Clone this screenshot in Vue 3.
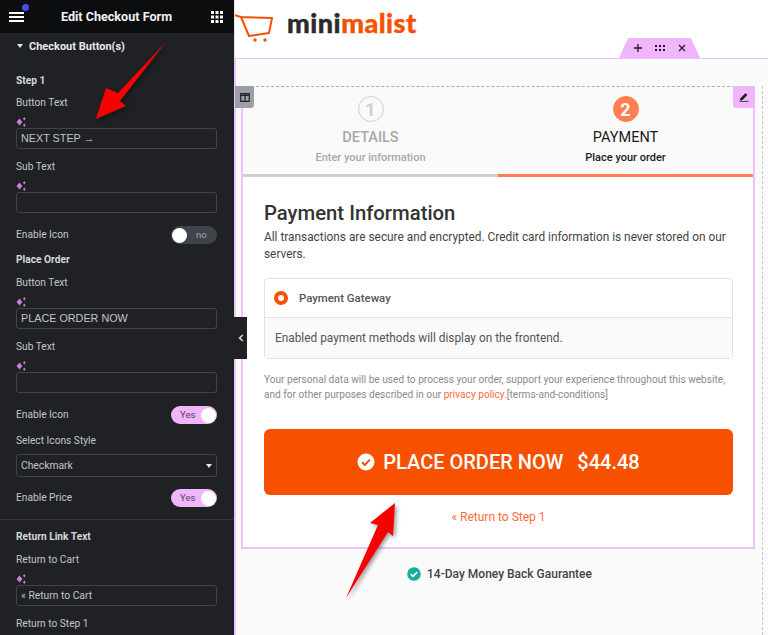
<template>
  <div class="page">
    <aside class="panel">
      <div class="panel-head">
        <span class="burger"><i></i><i></i><i></i><b class="dot"></b></span>
        <span class="panel-title">Edit Checkout Form</span>
        <svg class="apps" width="12" height="12" viewBox="0 0 12 12" fill="#fff">
          <template v-for="y in [0, 4.5, 9]" :key="y">
            <rect v-for="x in [0, 4.5, 9]" :key="x" :x="x" :y="y" width="3" height="3" />
          </template>
        </svg>
      </div>
      <div class="panel-body">
        <div class="group-title"><span class="caret"></span>Checkout Button(s)</div>

        <div class="sub-title first">Step 1</div>
        <div class="label">Button Text</div>
        <svg class="spark" viewBox="0 0 10 10"><path d="M3.500 1.500 6.500 5 3.500 8.500 .5 5zM8.300 0l1.300 1.700-1.300 1.700-1.300-1.700zM8.300 6.600l1.300 1.700-1.300 1.700-1.300-1.700z" /></svg>
        <div class="input">NEXT STEP →</div>
        <div class="label next">Sub Text</div>
        <svg class="spark" viewBox="0 0 10 10"><path d="M3.500 1.500 6.500 5 3.500 8.500 .5 5zM8.300 0l1.300 1.700-1.300 1.700-1.300-1.700zM8.300 6.600l1.300 1.700-1.300 1.700-1.300-1.700z" /></svg>
        <div class="input"></div>
        <div class="switch-row">
          <span class="label">Enable Icon</span>
          <span class="switch off"><em>no</em><u></u></span>
        </div>

        <div class="sub-title">Place Order</div>
        <div class="label btn-label">Button Text</div>
        <svg class="spark" viewBox="0 0 10 10"><path d="M3.500 1.500 6.500 5 3.500 8.500 .5 5zM8.300 0l1.300 1.700-1.300 1.700-1.300-1.700zM8.300 6.600l1.300 1.700-1.300 1.700-1.300-1.700z" /></svg>
        <div class="input">PLACE ORDER NOW</div>
        <div class="label next">Sub Text</div>
        <svg class="spark" viewBox="0 0 10 10"><path d="M3.500 1.500 6.500 5 3.500 8.500 .5 5zM8.300 0l1.300 1.700-1.300 1.700-1.300-1.700zM8.300 6.600l1.300 1.700-1.300 1.700-1.300-1.700z" /></svg>
        <div class="input"></div>
        <div class="switch-row">
          <span class="label">Enable Icon</span>
          <span class="switch"><em>Yes</em><u></u></span>
        </div>
        <div class="label style-label">Select Icons Style</div>
        <div class="input plain select">Checkmark<span class="caret small"></span></div>
        <div class="switch-row price-row">
          <span class="label">Enable Price</span>
          <span class="switch"><em>Yes</em><u></u></span>
        </div>
        <div class="divider"></div>

        <div class="sub-title return">Return Link Text</div>
        <div class="label btn-label">Return to Cart</div>
        <svg class="spark" viewBox="0 0 10 10"><path d="M3.500 1.500 6.500 5 3.500 8.500 .5 5zM8.300 0l1.300 1.700-1.300 1.700-1.300-1.700zM8.300 6.600l1.300 1.700-1.300 1.700-1.300-1.700z" /></svg>
        <div class="input plain">« Return to Cart</div>
        <div class="label next">Return to Step 1</div>
      </div>
      <div class="collapse">
        <svg width="6" height="8" viewBox="0 0 6 8"><path d="M4.800 1 1.600 4l3.200 3" fill="none" stroke="#d5d8dc" stroke-width="1.600" /></svg>
      </div>
    </aside>

    <main class="canvas">
      <header class="site-head">
        <svg class="cart" width="42" height="44" viewBox="0 0 42 44">
          <path d="M-1 15 6 17 14 36 34 33 37 18 6 17" fill="none" stroke="#f75000" stroke-width="2" stroke-linejoin="round" />
          <circle cx="20" cy="40" r="1.700" fill="#f75000" />
          <circle cx="30" cy="40" r="1.700" fill="#f75000" />
        </svg>
        <span class="logo">mini<span>malist</span></span>
        <div class="section-tab">
          <svg width="10" height="10" viewBox="0 0 10 10"><path d="M5 1v8M1 5h8" stroke="#1d1d1d" stroke-width="1.300" /></svg>
          <svg width="12" height="8" viewBox="0 0 12 8" fill="#1d1d1d"><rect x="1" y="1" width="2" height="2" /><rect x="5" y="1" width="2" height="2" /><rect x="9" y="1" width="2" height="2" /><rect x="1" y="5" width="2" height="2" /><rect x="5" y="5" width="2" height="2" /><rect x="9" y="5" width="2" height="2" /></svg>
          <svg width="10" height="10" viewBox="0 0 10 10"><path d="M2 2l6 6M8 2l-6 6" stroke="#1d1d1d" stroke-width="1.200" /></svg>
        </div>
      </header>

      <section class="section">
        <div class="widget">
          <span class="handle handle-column">
            <svg width="10" height="9" viewBox="0 0 10 9"><path d="M.7.7h8.600v7.600H.7zM5 .7v7.600M.7 2.300h8.600" fill="none" stroke="#1f2124" stroke-width="1.200" /></svg>
          </span>
          <span class="handle handle-edit">
            <svg width="10" height="10" viewBox="0 0 10 10"><path d="M1.500 6.500 6.500 1.500l1.600 1.500-5 5H1.500zM.5 9.400h9" fill="#1f2124" stroke="#1f2124" stroke-width=".8" /></svg>
          </span>
          <div class="steps">
            <div class="step">
              <span class="num">1</span>
              <div class="step-name">DETAILS</div>
              <div class="step-sub">Enter your information</div>
            </div>
            <div class="step active">
              <span class="num">2</span>
              <div class="step-name">PAYMENT</div>
              <div class="step-sub">Place your order</div>
            </div>
          </div>
          <div class="card">
            <h2>Payment Information</h2>
            <p class="intro">All transactions are secure and encrypted. Credit card information is never stored on our servers.</p>
            <div class="gateway">
              <div class="gateway-row"><span class="radio"></span>Payment Gateway</div>
              <div class="gateway-note">Enabled payment methods will display on the frontend.</div>
            </div>
            <p class="terms">Your personal data will be used to process your order, support your experience throughout this website, and for other purposes described in our <a>privacy policy</a>.[terms-and-conditions]</p>
            <div class="order-btn">
              <svg width="18" height="18" viewBox="0 0 18 18"><circle cx="9" cy="9" r="8.500" fill="#fff" /><path d="M5 9.300l2.800 2.700L13 6.600" fill="none" stroke="#f75000" stroke-width="2" /></svg>
              <span>PLACE ORDER NOW</span><span class="price">$44.48</span>
            </div>
            <div class="back-link">« Return to Step 1</div>
          </div>
        </div>
        <div class="guarantee">
          <svg width="14" height="14" viewBox="0 0 14 14"><circle cx="7" cy="7" r="6.800" fill="#17ae9b" /><path d="M3.700 7.200l2.300 2.200 4.300-4.400" fill="none" stroke="#fff" stroke-width="1.600" /></svg>
          14-Day Money Back Gaurantee
        </div>
      </section>
    </main>

    <svg class="arrows" width="768" height="635" viewBox="0 0 768 635">
      <path d="M166 42 118 93 106 88 96 119 126 106 120 101z" />
      <path d="M395 503 370 523 378 525 346 598 388 532 393 536z" />
    </svg>
  </div>
</template>

<script setup>
</script>

<style>
html, body {
  margin: 0;
  overflow: hidden;
}
</style>

<style scoped>
.page {
  position: relative;
  display: flex;
  width: 768px;
  height: 635px;
  overflow: hidden;
  font-family: Roboto, "Liberation Sans", sans-serif;
}

.panel {
  position: relative;
  flex: 0 0 234px;
  background: #1f2124;
  color: #d5d8dc;
}

.panel-head {
  display: flex;
  align-items: center;
  justify-content: space-between;
  height: 33px;
  padding: 0 11px 0 9px;
  background: #0c0d0e;
}

.burger {
  position: relative;
  display: flex;
  flex-direction: column;
  gap: 2px;
  width: 15px;
}

.burger i {
  height: 2px;
  background: #fff;
}

.dot {
  position: absolute;
  top: -8px;
  right: -5px;
  width: 7px;
  height: 7px;
  border-radius: 50%;
  background: #4a4af5;
}

.panel-title {
  margin-right: 2px;
  font-size: 12.600px;
  font-weight: 700;
  color: #f1f2f3;
}

.panel-body {
  padding: 0 17px 0 16px;
}

.group-title {
  display: flex;
  align-items: center;
  gap: 6px;
  height: 26px;
  font-size: 11px;
  font-weight: 700;
  color: #e6e8ea;
}

.caret {
  width: 0;
  height: 0;
  margin-left: 1px;
  border-left: 3.500px solid transparent;
  border-right: 3.500px solid transparent;
  border-top: 4px solid #e6e8ea;
}

.sub-title {
  height: 14px;
  margin-top: 9px;
  font-size: 10.200px;
  line-height: 14px;
  font-weight: 700;
  color: #d5d8dc;
}

.sub-title.first {
  margin-top: 15px;
}

.sub-title.return {
  margin-top: 10px;
}

.label {
  font-size: 10.200px;
  line-height: 14px;
  color: #c2c6cc;
}

.sub-title + .label {
  margin-top: 8px;
}

.sub-title + .label.btn-label {
  margin-top: 9px;
}

.label.next {
  margin-top: 11px;
}

.spark {
  display: block;
  width: 10px;
  height: 10px;
  margin-top: 7px;
  fill: #c77ddb;
}

.input {
  box-sizing: border-box;
  height: 21px;
  margin-top: 1px;
  padding: 0 4px;
  border: 1px solid #3f444b;
  border-radius: 3px;
  font-family: "Liberation Sans", sans-serif;
  font-size: 10.800px;
  line-height: 19px;
  color: #c2c6cc;
}

.input.plain {
  font-family: Roboto, sans-serif;
  font-size: 10.300px;
}

.select {
  display: flex;
  align-items: center;
  justify-content: space-between;
  height: 23px;
  margin-top: 6px;
  padding-right: 2px;
}

.caret.small {
  margin-right: 2px;
}

.switch-row {
  display: flex;
  align-items: center;
  justify-content: space-between;
  height: 18px;
  margin-top: 13px;
}

.price-row {
  margin-top: 12px;
}

.switch {
  position: relative;
  box-sizing: border-box;
  width: 46px;
  height: 18px;
  border-radius: 9px;
  background: #f1b5fb;
  font-size: 9.500px;
  line-height: 18px;
  padding-left: 9px;
  color: #55475a;
}

.switch em {
  font-style: normal;
}

.switch u {
  position: absolute;
  top: 1.500px;
  right: 1px;
  width: 15px;
  height: 15px;
  border-radius: 50%;
  background: #fff;
}

.switch.off {
  padding-left: 25px;
  background: #3f444b;
  color: #9da5ae;
}

.switch.off u {
  left: 1px;
  right: auto;
}

.style-label {
  margin-top: 10px;
}

.divider {
  height: 1px;
  margin: 12px -17px 0 -16px;
  background: #34383c;
}

.collapse {
  position: absolute;
  top: 317px;
  right: -13px;
  z-index: 2;
  display: flex;
  align-items: center;
  justify-content: center;
  width: 13px;
  height: 42px;
  background: #1f2124;
}

.canvas {
  flex: 1;
  display: flex;
  flex-direction: column;
  min-width: 0;
}

.site-head {
  position: relative;
  display: flex;
  align-items: flex-start;
  flex: 0 0 59px;
  box-sizing: border-box;
  border-bottom: 1px solid #f3c0ff;
  border-left: 1px solid #e6e6e6;
  background: #fff;
}

.logo {
  margin: 5px 0 0 10px;
  font-family: Lato, sans-serif;
  font-size: 27px;
  line-height: 36px;
  font-weight: 900;
  letter-spacing: 0.500px;
  -webkit-text-stroke: 0.400px currentColor;
  color: #2b2b2b;
}

.logo span {
  color: #f75000;
}

.section-tab {
  position: absolute;
  right: 68px;
  bottom: 0;
  display: flex;
  align-items: center;
  justify-content: center;
  gap: 11px;
  width: 81px;
  height: 20px;
  background: #f1b5fb;
  clip-path: polygon(9px 0, calc(100% - 9px) 0, 100% 100%, 0 100%);
}

.section {
  position: relative;
  flex: 1;
  box-sizing: border-box;
  padding: 27px 5px 0 6px;
  border-left: 2px solid #f3c0ff;
  background: #fafafa;
}

.section::after {
  content: "";
  position: absolute;
  top: 27px;
  bottom: 0;
  right: 5px;
  border-right: 1px dashed #c5c8cc;
}

.widget {
  position: relative;
  z-index: 1;
  margin-right: 8px;
  margin-left: -1px;
  border: 2px solid #f3c0ff;
  border-top: 1px dashed #c79bd2;
}

.handle {
  position: absolute;
  top: -1px;
  display: flex;
  align-items: center;
  justify-content: center;
  height: 22px;
}

.handle-column {
  left: -8px;
  width: 19px;
  background: #9aa0a6;
  border-radius: 0 0 3px 0;
}

.handle-edit {
  right: -2px;
  width: 22px;
  background: #f1b5fb;
  border-radius: 0 0 0 3px;
}

.steps {
  display: flex;
  box-sizing: border-box;
  height: 90px;
}

.step {
  flex: 1;
  box-sizing: border-box;
  padding-top: 9px;
  border-bottom: 3px solid #cfcfcf;
  text-align: center;
  color: #a8a8a8;
}

.num {
  display: inline-flex;
  align-items: center;
  justify-content: center;
  box-sizing: border-box;
  width: 26px;
  height: 26px;
  border: 1px solid #cfcfcf;
  border-radius: 50%;
  font-size: 18px;
  font-weight: 700;
  color: #cfcfcf;
}

.step-name {
  margin-top: 6px;
  font-size: 14.500px;
  line-height: 20px;
  font-weight: 500;
}

.step-sub {
  margin-top: 2px;
  font-size: 11px;
  line-height: 16px;
  font-weight: 500;
}

.active {
  border-bottom-color: #ff7f50;
  color: #1b1b1b;
}

.active .num {
  border-color: #ff7f50;
  background: #ff7f50;
  color: #fff;
}

.active .step-name {
  font-weight: 400;
}

.card {
  box-sizing: border-box;
  height: 370px;
  padding: 24px 20px 0 21px;
  border-radius: 0 0 4px 4px;
  background: #fff;
}

h2 {
  margin: 0;
  font-size: 20.300px;
  line-height: 24px;
  font-weight: 500;
  color: #333;
}

.intro {
  margin: 4px 0 0;
  font-size: 11.850px;
  line-height: 17px;
  color: #444;
}

.gateway {
  margin-top: 15px;
  border: 1px solid #e2e2e2;
  border-radius: 4px;
  font-size: 11.850px;
  color: #555;
}

.gateway-row {
  display: flex;
  align-items: center;
  gap: 11px;
  height: 38px;
  padding-left: 9px;
  border-bottom: 1px solid #e2e2e2;
  font-size: 11.400px;
  font-weight: 500;
}

.radio {
  box-sizing: border-box;
  width: 14px;
  height: 14px;
  border: 4px solid #f75000;
  border-radius: 50%;
  background: #fff;
}

.gateway-note {
  height: 40px;
  padding-left: 10px;
  line-height: 40px;
  background: #fafafa;
}

.terms {
  margin: 13px 0 0;
  font-size: 10.150px;
  line-height: 15px;
  color: #8a8a8a;
}

.terms a {
  color: #ff6a3c;
}

.order-btn {
  display: flex;
  align-items: center;
  justify-content: center;
  gap: 8px;
  height: 66px;
  margin-top: 27px;
  border-radius: 6px;
  background: #f75000;
  color: #fff;
  font-size: 20px;
  font-weight: 500;
}

.price {
  margin-left: 6px;
}

.back-link {
  margin-top: 14px;
  font-size: 12px;
  line-height: 16px;
  text-align: center;
  color: #ff6a3c;
}

.guarantee {
  display: flex;
  align-items: center;
  justify-content: center;
  gap: 6px;
  margin-top: 17px;
  padding-right: 6px;
  font-size: 12px;
  line-height: 16px;
  font-weight: 500;
  color: #444;
}

.arrows {
  position: absolute;
  left: 0;
  top: 0;
  z-index: 5;
  pointer-events: none;
  fill: #f70000;
  filter: drop-shadow(2px 2px 2px rgba(0, 0, 0, 0.4));
}
</style>
